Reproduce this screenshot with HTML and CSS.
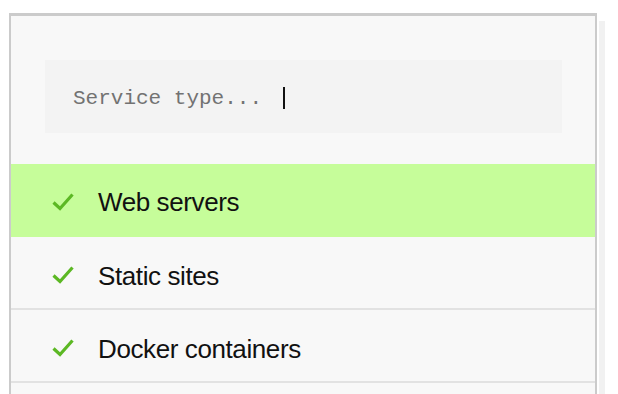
FILE: index.html
```html
<!DOCTYPE html>
<html lang="en">
<head>
    <meta charset="UTF-8">
    <meta name="viewport" content="width=device-width, initial-scale=1.0">
    <title>Service type</title>
    <link rel="stylesheet" href="styles.css">
</head>
<body>
    <div class="panel">
        <div class="search">
            <span class="search-text">Service type...</span>
            <span class="caret"></span>
        </div>

        <ul class="options">
            <li class="option active">
                <svg class="check" width="24" height="20" viewBox="0 0 24 20">
                    <path d="M2.5 10.5 L9 16.5 L21.5 2.5" fill="none" stroke="#5cb824" stroke-width="3.2"/>
                </svg>
                <span>Web servers</span>
            </li>
            <li class="option">
                <svg class="check" width="24" height="20" viewBox="0 0 24 20">
                    <path d="M2.5 10.5 L9 16.5 L21.5 2.5" fill="none" stroke="#5cb824" stroke-width="3.2"/>
                </svg>
                <span>Static sites</span>
            </li>
            <li class="option">
                <svg class="check" width="24" height="20" viewBox="0 0 24 20">
                    <path d="M2.5 10.5 L9 16.5 L21.5 2.5" fill="none" stroke="#5cb824" stroke-width="3.2"/>
                </svg>
                <span>Docker containers</span>
            </li>
            <li class="option empty"></li>
        </ul>
    </div>
</body>
</html>
```

FILE: styles.css
```css
* {
    margin: 0;
    padding: 0;
    box-sizing: border-box;
}

html, body {
    height: 394px;
    overflow: hidden;
}

body {
    background: #fff;
    font-family: "Liberation Sans", Arial, sans-serif;
    padding: 13px 0 0 9px;
}

/* main card */
.panel {
    width: 588px;
    background: #f8f8f8;
    border: 2px solid #cbcbcb;
    border-top-width: 3px;
    padding-top: 44px;
    box-shadow: 2px 0 0 #fff, 8px 8px 0 #f1f1f1;
}

.search {
    margin: 0 33px 0 34px;
    height: 73px;
    background: #f3f3f3;
    display: flex;
    align-items: center;
    padding-left: 28px;
    padding-top: 3px;
}

.search-text {
    font-family: "Liberation Mono", "DejaVu Sans Mono", monospace;
    font-size: 21px;
    color: #727272;
}

.caret {
    width: 2px;
    height: 22px;
    background: #111;
    margin-left: 21px;
}

.options {
    list-style: none;
    margin-top: 31px;
}

.option {
    display: flex;
    align-items: center;
    height: 73px;
    padding-left: 40px;
    padding-top: 4px;
    font-size: 26px;
    color: #111;
    letter-spacing: -0.4px;
    border-bottom: 2px solid #e2e2e2;
}

.option.active {
    background: #c6fd9a;
    border-bottom: none;
}

.option + .option {
    padding-top: 7px;
}

.check {
    margin-right: 23px;
    flex-shrink: 0;
    margin-top: -2px;
}
```
